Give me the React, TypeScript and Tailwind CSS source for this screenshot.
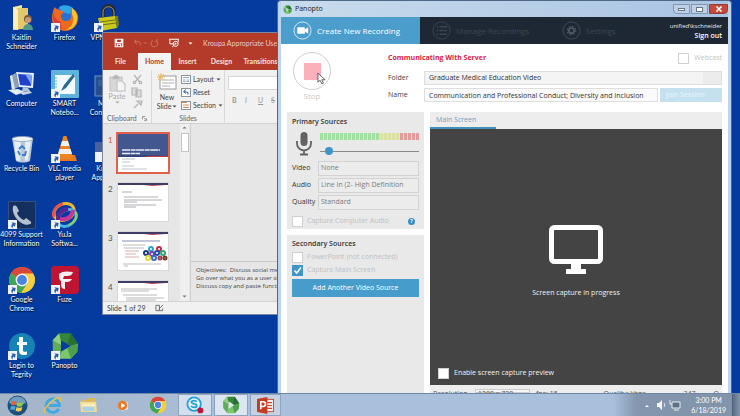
import { useState } from "react";
import type { ReactNode } from "react";
import clsx from "clsx";

/* ---------- shared drawings ---------- */

function ChromeLogo({ className }: { className?: string }) {
  return (
    <svg viewBox="0 0 48 48" className={className} aria-hidden>
      <circle cx="24" cy="24" r="22" fill="#f6cf3f" />
      <path d="M24 24 4.9 13A22 22 0 0 1 43.1 13Z" fill="#d9463a" />
      <path d="M4.9 13A22 22 0 0 0 23 46L33.5 29.5 24 24Z" fill="#3fa557" />
      <path d="M24 13H43.1A22 22 0 0 1 23 46L33.5 29.5Z" fill="#f6cf3f" />
      <circle cx="24" cy="24" r="11" fill="#f3f3f3" />
      <circle cx="24" cy="24" r="8.4" fill="#4a83e0" />
    </svg>
  );
}

/* three folded ribbons round an open play triangle */
function PanoptoLogo({ className }: { className?: string }) {
  return (
    <svg viewBox="0 0 48 48" className={className} aria-hidden>
      <path d="M14 2l3 12v20l-3 12L3 32V14z" fill="#5fae57" />
      <path d="M3 14L14 2l3 12v8z" fill="#8fce80" />
      <path d="M14 2h20l12 18-12 4-17-10z" fill="#37853d" />
      <path d="M34 2l12 18-12 4-6-3z" fill="#276f33" />
      <path d="M46 20l-1 14-11 12H14l3-12 17-10z" fill="#7cc76b" />
      <path d="M46 20l-1 14-11 12-6-18 6-4z" fill="#4e9f4b" />
    </svg>
  );
}

function UserFolder() {
  return (
    <svg viewBox="0 0 28 28" className="size-7" aria-hidden>
      <path d="M5 3l9-2v24l-9 1z" fill="#f3e3a0" />
      <path d="M9 4h11v21H8z" fill="#e3c96c" />
      <path d="M5 3l5 3v20l-5-1z" fill="#fbf0bd" />
      <circle cx="20" cy="15" r="4" fill="#7a5a3c" />
      <circle cx="20" cy="16" r="3" fill="#c89878" />
      <path d="M15 26c0-8 10-8 10 0z" fill="#4d9a8c" />
    </svg>
  );
}

function FirefoxLogo() {
  return (
    <svg viewBox="0 0 28 28" className="size-7" aria-hidden>
      <circle cx="14" cy="14" r="12" fill="#2b6fd0" />
      <path d="M8 3c4-3 11-2 14 1l-3 6-8-2z" fill="#2fa6e8" />
      <path d="M2 8c0-2 1-4 2-5 1 2 3 3 5 3l4 2-3 3c0 4 2 6 5 6 4 0 6-3 5-7l1-6c5 3 7 8 6 12-1 7-7 11-13 11S1 22 1 15c0-3 0-5 1-7z" fill="#ec6a1f" />
      <path d="M21 4c5 4 6 8 5 12-1 6-5 10-11 10 7-4 9-10 6-16z" fill="#f8c42c" />
      <path d="M2 8c1 5 3 8 8 10-1 3 0 5 2 7C5 24 1 19 2 8z" fill="#dd3b3a" />
    </svg>
  );
}

function VpnLock() {
  return (
    <svg viewBox="0 0 28 28" className="size-7" aria-hidden>
      <path d="M9 14V8c0-8 12-8 11 0v6" fill="none" stroke="#272b30" strokeWidth="4" />
      <path d="M9 13V8c0-7 11-7 11 0v5" fill="none" stroke="#8a939c" strokeWidth="1" />
      <path d="M4 14l17-2 2 12-16 3z" fill="#c9c81c" />
      <path d="M21 12l2 12 2-3-1-9z" fill="#7c7d12" />
      <path d="M6 18l15-2M7 21l15-2" stroke="#6f7010" strokeWidth="1" />
    </svg>
  );
}

function ComputerIcon() {
  return (
    <svg viewBox="0 0 28 28" className="size-7" aria-hidden>
      <path d="M2 6l6-3 3 14-7 3z" fill="#8fa0b4" />
      <path d="M2 6l2-1 3 14-3 1z" fill="#dfe6ee" />
      <path d="M8 2l18 1-1 15-14-1z" fill="#e4ecf4" />
      <path d="M10 4l14 1-1 11-11-1z" fill="#2042c8" />
      <path d="M17 4l7 1-1 9z" fill="#7ba4f0" />
      <path d="M15 17l5 1 2 3h-8z" fill="#b7c4d2" />
      <path d="M0 20l10-1 7 3-9 3z" fill="#e6edf4" />
      <path d="M11 22l11-1 2 2-9 2z" fill="#cbd6e1" />
    </svg>
  );
}

function SmartNotebook() {
  return (
    <svg viewBox="0 0 28 28" className="size-7" aria-hidden>
      <rect width="28" height="28" rx="1" fill="#5fb4dc" />
      <path d="M4 5h20v19H4z" fill="#f3fafd" />
      <path d="M22 4L13 15l-3 6 5-3L24 6z" fill="#256b94" />
      <path d="M4 8h2M4 11h2M4 14h2M4 17h2" stroke="#5fb4dc" strokeWidth="1" />
    </svg>
  );
}

function HiddenSlides() {
  return (
    <svg viewBox="0 0 28 28" className="size-7" aria-hidden>
      <rect x="1" y="6" width="26" height="20" fill="#274f8f" stroke="#6f92c4" />
      <path d="M4 10h18v6H4z" fill="#335f9f" />
    </svg>
  );
}

function HiddenDeck() {
  return (
    <svg viewBox="0 0 28 28" className="size-7" aria-hidden>
      <rect x="1" y="7" width="26" height="20" fill="#f2f3f6" />
      <rect x="1" y="7" width="26" height="10" fill="#4c609c" />
    </svg>
  );
}

function RecycleBin() {
  return (
    <svg viewBox="0 0 28 28" className="size-7" aria-hidden>
      <path d="M4 3h21l-3 23c-4 2-10 2-14 0z" fill="#b9c8d8" />
      <path d="M6 5h7l-1 21-4-1zM17 5h6l-3 20-3 1z" fill="#e6edf3" />
      <ellipse cx="14.5" cy="4" rx="10.500" ry="2.600" fill="#eef3f7" stroke="#8fa1b3" strokeWidth=".8" />
      <path d="M11 14l3-3 3 3M18 16l-1 4h-3M12 20l-2-4" fill="none" stroke="#3a7ad0" strokeWidth="1.800" />
    </svg>
  );
}

function VlcCone() {
  return (
    <svg viewBox="0 0 28 28" className="size-7" aria-hidden>
      <path d="M4 20h20l2 6H2z" fill="#e77a1c" />
      <path d="M12.500 1h3L22 22c-4 3-12 3-16 0z" fill="#ef8423" />
      <path d="M11 6h6l1.500 5h-9zM8.500 14h11l1.500 5H7z" fill="#f1f1ef" />
    </svg>
  );
}

function SupportPhone() {
  return (
    <svg viewBox="0 0 28 28" className="size-7" aria-hidden>
      <rect x=".5" y=".5" width="27" height="27" fill="#152f5e" stroke="#33517f" />
      <path d="M5 6c0-2 3-2 4 0l2 4-2 2c1 3 4 6 7 7l2-2 4 3c2 1 1 3 0 3C15 27 3 15 5 6z" fill="#b4c0d3" />
    </svg>
  );
}

function YujaLogo() {
  return (
    <svg viewBox="0 0 28 28" className="size-7" aria-hidden fill="none">
      <ellipse cx="13" cy="11" rx="10.500" ry="8" transform="rotate(-25 13 11)" stroke="#f0b72d" strokeWidth="3" />
      <path d="M3 16C1 10 6 4 12 3" stroke="#e8564a" strokeWidth="3" />
      <ellipse cx="16" cy="17" rx="10" ry="7.500" transform="rotate(-35 16 17)" stroke="#4ab5e0" strokeWidth="3" />
      <path d="M25 11c2 5-2 11-7 13" stroke="#8fd05c" strokeWidth="2" />
      <path d="M8 21c-3-6 2-12 9-13" stroke="#5b2390" strokeWidth="4" />
      <path d="M9 18c7 1 12-2 13-9" stroke="#c9359a" strokeWidth="4" />
    </svg>
  );
}

function FuzeLogo() {
  return (
    <svg viewBox="0 0 28 28" className="size-7" aria-hidden>
      <rect width="28" height="28" rx="4" fill="#c01530" />
      <path d="M8 8c3-3 8-3 14-2-1 3-3 4-6 4h-3l-1 3h9c-1 2-3 3-5 3h-2v7c-3 0-4-2-4-4v-4C8 14 8 11 8 8z" fill="#f8eef0" />
    </svg>
  );
}

function TegrityLogo() {
  return (
    <svg viewBox="0 0 28 28" className="size-7" aria-hidden>
      <circle cx="14" cy="14" r="13" fill="#1683b5" />
      <path d="M11 5h4v5h4v3h-4v5c0 2 1 2 4 1.500v3c-5 1.500-8 0-8-4V13H9v-3h2z" fill="#fff" />
    </svg>
  );
}

function ShortcutArrow() {
  return (
    <svg viewBox="0 0 9 9" className="absolute bottom-0 left-0 size-[9px]" aria-hidden>
      <rect width="9" height="9" fill="#eef3fa" />
      <path d="M2 8c0-3 1-4 3-4V2l3 3-3 3V6C4 6 3 6.500 2 8z" transform="rotate(-35 4.500 4.500)" fill="#2a5aa8" />
    </svg>
  );
}

/* ---------- desktop ---------- */

type DesktopItem = { label: string; icon: ReactNode; shortcut?: boolean } | null;

const desktopItems: DesktopItem[] = [
  { label: "Kaitlin\nSchneider", icon: <UserFolder /> },
  { label: "Firefox", icon: <FirefoxLogo />, shortcut: true },
  { label: "VPN Client", icon: <VpnLock />, shortcut: true },
  { label: "Computer", icon: <ComputerIcon /> },
  { label: "SMART\nNotebo...", icon: <SmartNotebook />, shortcut: true },
  { label: "Media\nConnection", icon: <HiddenSlides /> },
  { label: "Recycle Bin", icon: <RecycleBin /> },
  { label: "VLC media\nplayer", icon: <VlcCone />, shortcut: true },
  { label: "Kroupa\nAppropri...", icon: <HiddenDeck /> },
  { label: "4099 Support\nInformation", icon: <SupportPhone />, shortcut: true },
  { label: "YuJa\nSoftwa...", icon: <YujaLogo />, shortcut: true },
  null,
  { label: "Google\nChrome", icon: <ChromeLogo className="size-7" />, shortcut: true },
  { label: "Fuze", icon: <FuzeLogo />, shortcut: true },
  null,
  { label: "Login to\nTegrity", icon: <TegrityLogo />, shortcut: true },
  { label: "Panopto", icon: <PanoptoLogo className="size-7" />, shortcut: true },
  null,
];

function DesktopIcons() {
  return (
    <div className="grid h-full w-[129px] grid-cols-3 grid-rows-6">
      {desktopItems.map((item, i) =>
        item ? (
          <button key={i} className="flex min-w-0 flex-col items-center justify-start pt-1 text-center">
            <span className="relative block size-7">
              {item.icon}
              {item.shortcut && <ShortcutArrow />}
            </span>
            <span className="mt-px text-[7px] leading-[9px] whitespace-pre text-white [text-shadow:0_1px_1px_#000]">
              {item.label}
            </span>
          </button>
        ) : (
          <span key={i} />
        ),
      )}
    </div>
  );
}

/* ---------- PowerPoint ---------- */

function Caret() {
  return (
    <svg viewBox="0 0 5 3" className="inline-block h-[3px] w-[5px]" fill="currentColor" aria-hidden>
      <path d="M.5.500h4l-2 2z" />
    </svg>
  );
}

function SlideThumb({ n }: { n: number }) {
  const title = n === 1;
  return (
    <div className="flex h-[49px] shrink-0 gap-[2px]">
      <span className={clsx("w-2 text-[8px] leading-3", title ? "text-[#d2573f]" : "text-[#555]")}>{n}</span>
      <svg
        viewBox="0 0 50 38"
        className={clsx("h-[38px] w-[50px]", title ? "outline-2 outline-[#e0604a]" : "outline-1 outline-[#d8d8d8]")}
        aria-hidden
      >
        <rect width="50" height="38" fill="#fff" />
        {title ? (
          <>
            <rect width="50" height="22" fill="#43578f" />
            <path d="M0 21h28l22 1v1H0z" fill="#37447a" />
            <path d="M26 22h24v1H30z" fill="#c23b3b" />
            <path d="M4 16h38M4 19.500h18" stroke="#e8ebf4" strokeWidth="1.600" strokeDasharray="8 .6 5 .5" />
            <path d="M4 25h13M4 28h8M4 32h12M4 35h25" stroke="#a3a9ba" strokeWidth=".7" />
          </>
        ) : (
          <>
            <path d="M0 0h50v2H0z" fill="#3d3c66" />
            <path d="M26 2h22l-14 1z" fill="#c3424e" />
          </>
        )}
        {n === 2 && (
          <path d="M4 9h10M6 14h34M6 17h38M6 19h13M6 22h32M6 24h12" stroke="#9a9a9e" strokeWidth=".8" />
        )}
        {n === 3 && (
          <>
            <path d="M4 9h38" stroke="#8390b5" strokeWidth="1.200" />
            <path d="M5 13h22M6 16h20M5 32h38M6 34h4" stroke="#a9a9b0" strokeWidth=".8" />
            <path d="M7 19h14M7 22h11M7 25h14" stroke="#d49a9a" strokeWidth=".8" />
            <g fill="none" strokeWidth="2">
              <circle cx="28" cy="21" r="2" stroke="#1d3a80" />
              <circle cx="33" cy="17" r="2" stroke="#2d9fd0" />
              <circle cx="41" cy="17" r="2" stroke="#c52a44" />
              <circle cx="34" cy="22" r="2" stroke="#8e3aa0" />
              <circle cx="39" cy="21" r="2" stroke="#234fa8" />
              <circle cx="45" cy="21" r="2" stroke="#2fa56b" />
              <circle cx="30" cy="26" r="2" stroke="#e8d93a" />
              <circle cx="36" cy="26" r="2" stroke="#2d6fd0" />
              <circle cx="42" cy="26" r="1.500" stroke="#a8384a" />
              <circle cx="47" cy="26" r="1.500" stroke="#6b3b28" />
            </g>
          </>
        )}
        {n === 4 && (
          <path d="M3 8h36M3 10h28M5 14h34M8 17h38M8 19h30M8 22h36M8 25h30" stroke="#a8a8ac" strokeWidth=".8" />
        )}
      </svg>
    </div>
  );
}

function PowerPointWindow() {
  return (
    <section
      aria-label="PowerPoint"
      className="absolute top-[32px] left-[102px] flex h-[283px] w-[400px] flex-col overflow-hidden border border-[#7d86a0] bg-[#e6e6e6] text-[7px] text-[#444]"
    >
      <div className="flex h-5 shrink-0 items-center bg-[#b43a29] pl-[11px] text-white">
        <svg viewBox="0 0 12 12" className="size-[10px]" fill="none" stroke="#fff" strokeWidth="1.400" aria-hidden>
          <path d="M1.500 1.500h9v9h-9zM3 2v3.500h6V2M4 10V7.500h4V10" />
        </svg>
        <svg viewBox="0 0 34 12" className="ml-2 h-[10px] w-[30px]" fill="none" stroke="#cb6a5b" strokeWidth="1.300" aria-hidden>
          <path d="M4 2L2 5l3 2M2 5c5-2 8 0 7 4M13 6h4M24 3a4 4 0 1 0 5 1M29 1v3h-3" />
        </svg>
        <svg viewBox="0 0 14 12" className="ml-[6px] h-[10px] w-3" fill="none" stroke="#fff" strokeWidth="1.200" aria-hidden>
          <path d="M1 1.500h12M2 2v5h4M12 2v3M5 11l2-3" />
          <circle cx="9" cy="7" r="3" />
          <path d="M8 5.500v3L10.500 7z" fill="#fff" stroke="none" />
        </svg>
        <span className="ml-2 w-2">
          <Caret />
        </span>
        <span className="ml-[7px] whitespace-nowrap text-[#edc9c3]">Kroupa Appropriate Use of Electronic Media</span>
      </div>

      <nav className="flex h-[17px] shrink-0 items-stretch bg-[#b43a29] font-bold text-[#f6e3df]">
        <button className="w-[35px] text-center">File</button>
        <button className="w-[33px] bg-[#f3f3f3] text-center text-[#b43a29]">Home</button>
        <button className="w-[33px] text-center">Insert</button>
        <button className="w-[35px] text-center">Design</button>
        <button className="w-[43px] text-center">Transitions</button>
      </nav>

      <div className="flex h-[54px] shrink-0 border-b border-[#d2d2d2] bg-[#f1f1f1]">
        <div className="flex w-[49px] flex-col justify-between border-r border-[#d9d9d9] pt-1 pl-1">
          <div className="flex gap-1 text-[#a6a6a6]">
            <button className="flex w-5 flex-col items-center leading-[9px]">
              <svg viewBox="0 0 18 18" className="size-[18px]" fill="none" stroke="#c4c4c4" strokeWidth="1.200" aria-hidden>
                <path d="M2 3h12v14H2z" fill="#d8d8d8" />
                <path d="M5 3l3-2 3 2v2H5z" fill="#b4b4b4" />
                <path d="M9 7h5l3 3v7H9z" fill="#f4f4f4" />
              </svg>
              Paste
              <Caret />
            </button>
            <svg viewBox="0 0 14 36" className="h-9 w-[14px]" fill="none" stroke="#b4b4b4" strokeWidth="1.200" aria-hidden>
              <path d="M3 1l6 7M10 1L4 8" />
              <circle cx="3.500" cy="8.500" r="1.200" />
              <circle cx="9.500" cy="8.500" r="1.200" />
              <path d="M1 14h5v7H1zM5 16h5v7H5zM3 34l4-4M6 27l4 4 1-4z" fill="#dedede" />
            </svg>
          </div>
          <div className="flex items-center justify-between pr-1 leading-[10px] text-[#666]">
            Clipboard
            <svg viewBox="0 0 6 6" className="size-[5px]" fill="none" stroke="#888" aria-hidden>
              <path d="M.5 4V.500H4M2 2l3 3M5.500 2.500v3h-3" />
            </svg>
          </div>
        </div>
        <div className="flex w-[73px] flex-col justify-between border-r border-[#d9d9d9] pt-[3px] pl-1">
          <div className="flex gap-[3px]">
            <button className="flex w-[22px] flex-col items-center leading-[9px]">
              <svg viewBox="0 0 20 18" className="mb-[2px] h-[18px] w-5" aria-hidden>
                <rect x="3" y="3" width="16" height="13" fill="#fff" stroke="#9a9a9a" />
                <path d="M5 7h12M5 10h12M5 13h8" stroke="#b0b0b0" />
                <path d="M4 0v8M0 4h8M1 1l6 6M7 1L1 7" stroke="#eab95a" />
              </svg>
              <span>New</span>
              <span className="flex items-center gap-px whitespace-nowrap">
                Slide <Caret />
              </span>
            </button>
            <div className="flex flex-col">
              {["Layout", "Reset", "Section"].map((label) => (
                <button key={label} className="flex h-[13px] items-center gap-[2px] whitespace-nowrap">
                  <svg viewBox="0 0 10 9" className="h-[9px] w-[10px]" aria-hidden>
                    <rect x=".5" y=".5" width="9" height="8" fill="#fff" stroke="#8c949e" />
                    {label === "Layout" && <path d="M2 2.500h6M2 5h2.500M2 6.500h2.500M5.500 5H8M5.500 6.500H8" stroke="#9aa8b8" />}
                    {label === "Reset" && <path d="M7 6.500V4.500L3 3.500M5 1.500L2.500 3.500 5 5.500" fill="none" stroke="#2f6ba8" />}
                    {label === "Section" && <path d="M0 1.500h6M2 4h6M2 6.500h6" stroke="#d88a58" />}
                  </svg>
                  {label}
                  {label !== "Reset" && <Caret />}
                </button>
              ))}
            </div>
          </div>
          <div className="pr-1 text-center leading-[10px] text-[#666]">Slides</div>
        </div>
        <div className="flex flex-1 flex-col gap-[5px] pt-[6px] pl-[3px]">
          <div className="h-[14px] w-24 border border-[#d6d6d6] bg-white" />
          <div className="flex pl-1 text-[#999]">
            <b className="w-[13px]">B</b>
            <i className="w-[13px]">I</i>
            <u className="w-[13px]">U</u>
            <s className="w-[13px]">S</s>
          </div>
        </div>
      </div>

      <div className="flex min-h-0 flex-1">
        <div className="flex w-[77px] flex-col overflow-hidden pt-[10px] pl-[5px]">
          {[1, 2, 3, 4].map((n) => (
            <SlideThumb key={n} n={n} />
          ))}
        </div>
        <div className="flex w-[9px] flex-col items-center justify-between bg-[#efefef] py-px text-[#777]">
          <div className="flex w-full flex-col items-center gap-[2px]">
            <span className="flex h-[6px] rotate-180 items-center">
              <Caret />
            </span>
            <div className="h-[19px] w-2 border border-[#c4c4c4] bg-white" />
          </div>
          <span className="flex h-2 items-center">
            <Caret />
          </span>
        </div>
        <div className="ml-px flex flex-1 flex-col justify-end border-l border-[#cfcfcf]">
          <p className="h-10 border-t border-[#c9c9c9] pt-1 pl-[5px] font-['Open_Sans',sans-serif] text-[6px] leading-2 whitespace-nowrap">
            Objectives: &nbsp;Discuss social media policy
            <br />
            Go over what you as a user should know
            <br />
            Discuss copy and paste functions
          </p>
        </div>
      </div>

      <footer className="flex h-[13px] shrink-0 items-center gap-[10px] border-t border-[#d4d4d4] bg-[#f1f1f1] pl-1">
        Slide 1 of 29
        <svg viewBox="0 0 10 9" className="h-2 w-[9px]" fill="none" stroke="#666" aria-hidden>
          <path d="M5 1.500H1v6h4M5 1.500v6h3.500V5M4 6l5-5" />
        </svg>
      </footer>
    </section>
  );
}

/* ---------- Panopto ---------- */

function Check({ label, muted, big, ...rest }: { label: string; muted?: boolean; big?: boolean; defaultChecked?: boolean }) {
  return (
    <label className={clsx("flex h-[13px] items-center", big ? "gap-[5px]" : "gap-1", muted && "text-[#bfbfbf]")}>
      <span className="grid size-[11px] shrink-0 place-items-center">
        <input
          type="checkbox"
          {...rest}
          className="peer col-start-1 row-start-1 size-[11px] appearance-none border border-[#d0d0d0] bg-white checked:border-[#3f95c6] checked:bg-[#3f95c6]"
        />
        <svg viewBox="0 0 11 11" className="pointer-events-none invisible col-start-1 row-start-1 size-[11px] peer-checked:visible" aria-hidden>
          <path d="M2.500 5.500l2.200 2.500L9 2.500" fill="none" stroke="#fff" strokeWidth="1.500" />
        </svg>
      </span>
      {label}
    </label>
  );
}

function SourceSelect({ label, value }: { label: string; value: string }) {
  return (
    <label className="flex h-[17px] items-center">
      <span className="w-[26px] shrink-0 text-[#333]">{label}</span>
      <select className="h-[15px] min-w-0 flex-1 appearance-none border border-[#d2d2d2] bg-[#ececec] px-[2px] text-[#7b7b7b]">
        <option>{value}</option>
      </select>
    </label>
  );
}

function LevelMeter() {
  return (
    <div className="flex h-[7px] gap-px bg-[#dde6da]">
      {Array.from({ length: 25 }, (_, i) => (
        <span key={i} className={clsx("flex-1", i < 15 ? "bg-[#a2dfa2]" : i < 20 ? "bg-[#dbe2a4]" : "bg-[#e09c9c]")} />
      ))}
    </div>
  );
}

function PrimarySources() {
  const [level, setLevel] = useState(6);
  return (
    <section className="bg-[#e9e9e9] px-[5px] pt-1 pb-px">
      <h2 className="leading-3 font-semibold text-[#333]">Primary Sources</h2>
      <div className="flex gap-1 pt-1 pb-1">
        <svg viewBox="0 0 24 24" className="h-6 w-6 shrink-0" aria-hidden>
          <rect x="8.500" y="0" width="7" height="14" rx="3.500" fill="#636363" />
          <path d="M5 9v2.500a7 7 0 0 0 14 0V9M12 18v4M8 22.500h8" fill="none" stroke="#636363" strokeWidth="1.800" />
        </svg>
        <div className="flex flex-1 flex-col gap-[7px] pt-px">
          <LevelMeter />
          <input
            type="range"
            aria-label="Volume"
            value={level}
            onChange={(e) => setLevel(Number(e.target.value))}
            className="h-2 w-full appearance-none bg-[linear-gradient(#8a8a8a,#8a8a8a)] bg-[length:100%_1px] bg-center bg-no-repeat [&::-webkit-slider-thumb]:size-2 [&::-webkit-slider-thumb]:appearance-none [&::-webkit-slider-thumb]:rounded-full [&::-webkit-slider-thumb]:bg-[#3f95c6]"
          />
        </div>
      </div>
      <SourceSelect label="Video" value="None" />
      <SourceSelect label="Audio" value="Line In (2- High Definition" />
      <SourceSelect label="Quality" value="Standard" />
      <div className="flex items-center justify-between pt-1 pr-1">
        <Check label="Capture Computer Audio" muted />
        <button className="size-[7px] rounded-full bg-[#3a8dc4] text-[5px] leading-[7px] font-bold text-white">?</button>
      </div>
    </section>
  );
}

function SecondarySources() {
  return (
    <section className="flex-1 bg-[#e9e9e9] px-[5px] pt-[3px]">
      <h2 className="pb-px leading-3 font-semibold text-[#333]">Secondary Sources</h2>
      <Check label="PowerPoint (not connected)" muted />
      <Check label="Capture Main Screen" muted defaultChecked />
      <button className="mt-[2px] h-[18px] w-[127px] bg-[#469ccb] text-white">Add Another Video Source</button>
    </section>
  );
}

function RecordingForm() {
  return (
    <div className="flex pt-2 pr-[6px] pl-3">
      <div className="flex w-[95px] shrink-0 flex-col items-start">
        <button className="flex w-[38px] flex-col items-center leading-[10px] text-[#c9c9c9]">
          <span className="grid size-[38px] place-items-center rounded-full border border-[#cfcfcf]">
            <span className="size-[17px] bg-[#fab1b9]" />
          </span>
          <span className="mt-px text-[8px]">Stop</span>
        </button>
      </div>
      <div className="flex min-w-0 flex-1 flex-col gap-[3px]">
        <div className="flex h-4 items-start justify-between">
          <p className="leading-3 font-bold text-[#d9223f]">Communicating With Server</p>
          <Check label="Webcast" muted big />
        </div>
        <label className="flex items-center">
          <span className="w-9">Folder</span>
          <select className="h-[14px] min-w-0 flex-1 appearance-none border border-[#dedede] bg-[linear-gradient(90deg,#f4f4f4_94%,#ececec_94%)] px-1 text-[#333]">
            <option>Graduate Medical Education Video</option>
          </select>
        </label>
        <div className="flex items-center gap-[2px]">
          <label className="flex min-w-0 flex-1 items-center">
            <span className="w-9">Name</span>
            <input
              defaultValue="Communication and Professional Conduct; Diversity and Inclusion"
              className="h-[14px] min-w-0 flex-1 border border-[#dedede] bg-[#fafafa] px-1 text-[#333]"
            />
          </label>
          <button className="h-[14px] w-[62px] bg-[#c5e0ef] pl-[6px] text-left text-[#eef7fc]">Join Session</button>
        </div>
      </div>
    </div>
  );
}

function MainScreen() {
  return (
    <section className="flex min-w-0 flex-1 flex-col bg-[#ededed]">
      <div className="h-[17px] shrink-0">
        <button className="h-[17px] w-[66px] border-b-2 border-[#3f93b8] pt-px pl-[6px] text-left text-[#6c9fc4]">Main Screen</button>
      </div>
      <div className="flex flex-1 flex-col bg-[#444] text-[#f2f2f2]">
        <div className="flex flex-1 flex-col items-center justify-end pb-[68px]">
          <svg viewBox="0 0 54 50" className="h-[50px] w-[54px]" aria-hidden>
            <rect x="2.500" y="2.500" width="49" height="34" rx="3" fill="none" stroke="#fff" strokeWidth="5" />
            <path d="M22 38h10v6h5v5H17v-5h5z" fill="#fff" />
          </svg>
          <p className="mt-3 leading-3">Screen capture in progress</p>
        </div>
        <div className="pb-[5px] pl-2">
          <Check label="Enable screen capture preview" big />
        </div>
      </div>
      <div className="flex h-2 shrink-0 overflow-hidden px-[3px] pt-1 leading-[10px] text-[#555]">
        <span className="w-[42px]">Resolution</span>
        <span className="w-[55px] border border-[#ccc] bg-[#f7f7f7] px-[2px] leading-2">1280 x 720</span>
        <span className="flex-1 pl-[6px]">fps: 15</span>
        <span className="w-20">Quality: kbps</span>
        <span className="w-[30px]">347</span>
        <span>O</span>
      </div>
    </section>
  );
}

function PanoptoWindow() {
  return (
    <section
      aria-label="Panopto"
      className="absolute inset-y-0 right-2 left-[277px] flex flex-col rounded-t border border-b-0 border-[#4d6886] bg-[#bdd5ec] px-[3px] font-['Open_Sans',sans-serif] text-[7px] text-[#444]"
    >
      <header className="flex h-4 shrink-0 items-center gap-[3px] bg-gradient-to-r from-[#c9dcec] to-[#a9c3e3] pl-[2px] text-[#222]">
        <PanoptoLogo className="size-[9px]" />
        <span className="flex-1 pt-px">Panopto</span>
        <div className="flex h-[10px] gap-px self-center">
          <button aria-label="Minimize" className="grid w-[17px] place-items-center rounded-bl border border-[#8097b4] bg-[#bfd0e5]">
            <span className="h-[3px] w-[7px] border border-[#65758a] bg-white" />
          </button>
          <button aria-label="Maximize" className="grid w-[17px] place-items-center border border-[#8097b4] bg-[#bfd0e5]">
            <span className="h-[5px] w-[7px] border border-[#65758a] bg-white" />
          </button>
          <button aria-label="Close" className="grid w-[19px] place-items-center rounded-br border border-[#8d3f3a] bg-[#c8483c]">
            <svg viewBox="0 0 8 6" className="h-[6px] w-2" stroke="#fff" strokeWidth="1.600" aria-hidden>
              <path d="M1.500.5l5 5M6.500.5l-5 5" />
            </svg>
          </button>
        </div>
      </header>

      <nav className="flex h-[27px] shrink-0 items-center bg-[#1e2834] text-[8px] text-[#3d4752]">
        <button className="flex h-full w-[139px] items-center gap-[5px] bg-[#4b9dcc] pl-3 text-white">
          <svg viewBox="0 0 20 20" className="size-[19px]" aria-hidden>
            <circle cx="10" cy="10" r="9" fill="none" stroke="#d9ecf6" />
            <rect x="4.500" y="6.500" width="8" height="7" rx="1" fill="#fff" />
            <path d="M12.500 9l3.500-2.500v7L12.500 11z" fill="#fff" />
          </svg>
          Create New Recording
        </button>
        <button className="flex w-[130px] items-center gap-[5px] pl-3">
          <svg viewBox="0 0 20 20" className="size-[19px]" fill="none" stroke="#3b4550" aria-hidden>
            <circle cx="10" cy="10" r="9" />
            <path d="M5 6h1.500M8 6h8M5 10h1.500M8 10h8M5 14h1.500M8 14h8" strokeWidth="1.500" />
          </svg>
          Manage Recordings
        </button>
        <button className="flex flex-1 items-center gap-[5px] pl-3">
          <svg viewBox="0 0 20 20" className="size-[19px]" fill="none" stroke="#4a545f" aria-hidden>
            <circle cx="10" cy="10" r="9" strokeWidth=".8" />
            <circle cx="10" cy="10" r="2.800" strokeWidth="2" />
            <circle cx="10" cy="10" r="4.400" strokeWidth="1.400" strokeDasharray="1.700 1.750" />
          </svg>
          Settings
        </button>
        <div className="pr-[6px] text-right text-[7px] leading-[9px] text-[#e8ecf0]">
          <p className="text-[6px]">unified\kschneider</p>
          <a href="#signout" className="block font-semibold text-white">
            Sign out
          </a>
        </div>
      </nav>

      <div className="flex min-h-0 flex-1 flex-col bg-white">
        <RecordingForm />
        <div className="mt-[10px] flex min-h-0 flex-1 gap-[6px] pr-[6px] pl-[6px]">
          <div className="flex w-[137px] shrink-0 flex-col gap-[6px]">
            <PrimarySources />
            <SecondarySources />
          </div>
          <MainScreen />
        </div>
      </div>

      <svg viewBox="0 0 10 14" className="absolute top-[71px] left-[39px] h-[13px] w-[9px]" aria-hidden>
        <path d="M1 1v10l2.500-2 1.800 4 1.800-.8L5.400 8.400H9z" fill="#fff" stroke="#444" strokeWidth=".9" />
      </svg>
    </section>
  );
}

/* ---------- taskbar ---------- */

function Taskbar() {
  return (
    <footer className="flex h-[23px] shrink-0 items-center border-t border-[#6f88a8] bg-[#a9c0dc]">
      <div className="flex h-full items-center bg-gradient-to-r from-[#a3b4c7] to-[#a8bcd4]">
        <button aria-label="Start" className="grid w-[34px] place-items-center">
          <svg viewBox="0 0 22 22" className="size-[21px]" aria-hidden>
            <circle cx="11" cy="11" r="10.500" fill="#1e4f7c" />
            <path d="M2 8a9.500 9.500 0 0 1 18 0c-5 3-13 3-18 0z" fill="#6f9dbd" />
            <path d="M5 7c2-1 3-1 5 0l-.8 4c-2-1-3-1-5 0z" fill="#e2633a" />
            <path d="M11 7.500c2 1 4 1 6 0l-1 4c-2 1-4 1-6 0z" fill="#94c94c" />
            <path d="M4 12c2-1 3-1 5 0l-.8 4c-2-1-3-1-5 0z" fill="#4fa5e4" />
            <path d="M10 12.500c2 1 4 1 6 0l-1 4c-2 1-4 1-6 0z" fill="#f5cf49" />
          </svg>
        </button>
        <button aria-label="Internet Explorer" className="grid w-9 place-items-center">
          <svg viewBox="0 0 20 20" className="size-[19px]" fill="none" aria-hidden>
            <path d="M16.500 13.500a7 7 0 1 1 .8-3.500H6" stroke="#3fa9e2" strokeWidth="3" />
            <path d="M2 18C-1 14 12 1 18 2c1 .5 1 2 0 4" stroke="#e8c24a" strokeWidth="1.500" />
          </svg>
        </button>
        <button aria-label="Windows Explorer" className="grid w-9 place-items-center">
          <svg viewBox="0 0 20 18" className="h-[17px] w-[19px]" aria-hidden>
            <path d="M2 3h6l1-2h8v4H2z" fill="#dcb95a" />
            <path d="M1 5h17l1 11H2z" fill="#f2dc91" />
            <path d="M4 10h12v5H4z" fill="#a7d3e8" />
            <path d="M3 7h14v3H3z" fill="#f9edbd" />
          </svg>
        </button>
        <button aria-label="Media Player" className="grid w-8 place-items-center">
          <svg viewBox="0 0 14 14" className="size-[13px]" aria-hidden>
            <path d="M6 2l7 2v7l-7 2z" fill="#d9e4ee" />
            <circle cx="7" cy="7" r="5" fill="#ea7a22" />
            <path d="M5.500 4v6L10 7z" fill="#fff" />
          </svg>
        </button>
        <button aria-label="Chrome" className="grid w-10 place-items-center">
          <ChromeLogo className="size-[18px]" />
        </button>
      </div>
      <div className="flex h-full flex-1 gap-[2px]">
        <button aria-label="Skype" className="grid w-[34px] place-items-center border border-[#8ea3bd] bg-[#d3dfec]">
          <svg viewBox="0 0 20 20" className="size-[18px]" aria-hidden>
            <circle cx="9" cy="9" r="7.500" fill="#eef8fd" stroke="#22a0dc" strokeWidth="2" />
            <path d="M12 6.500c-1-2-6-2-6 .3 0 2.500 6 1.500 6 4 0 2.400-5 2.600-6.300.2" fill="none" stroke="#22a0dc" strokeWidth="2" />
            <circle cx="16" cy="16" r="3.300" fill="#c0153a" />
          </svg>
        </button>
        <button aria-label="Panopto Recorder" className="grid w-[34px] place-items-center border border-[#8ea3bd] bg-[#dce6f0]">
          <PanoptoLogo className="size-[18px]" />
        </button>
        <button aria-label="PowerPoint" className="grid w-[31px] place-items-center border border-[#8ea3bd] bg-[#c4d2e3]">
          <svg viewBox="0 0 18 18" className="size-[17px]" aria-hidden>
            <rect x="8" y="2.500" width="9.500" height="13" fill="#f7efed" stroke="#c8452c" />
            <path d="M11 6h5M11 9h5M11 12h5" stroke="#c8452c" strokeWidth="1.300" />
            <path d="M0 2l11-2v18L0 16z" fill="#c33d22" />
            <path d="M4 13V5h2.500a2.400 2.400 0 0 1 0 5H4" fill="none" stroke="#fff" strokeWidth="1.700" />
          </svg>
        </button>
      </div>
      <div className="flex h-full items-center bg-gradient-to-r from-[#a9c0dc] via-[#8496ad] via-20% to-[#8294aa] pl-8 text-white">
        <svg viewBox="0 0 36 12" className="mr-[10px] h-3 w-9" aria-hidden>
          <path d="M0 8l2-2 2 2z" fill="#fff" />
          <path d="M12 4h2l3-3v10l-3-3h-2z" fill="#f4f7fa" />
          <path d="M19 4c1 1 1 3 0 4" stroke="#e3e9f0" fill="none" />
          <path d="M27 3h8v6h-8zM29 11h5M25 1v4h2" stroke="#e9eef4" fill="#5d7088" />
        </svg>
        <p className="pr-[6px] text-center text-[7px] leading-[10px]">
          3:00 PM
          <br />
          6/18/2019
        </p>
      </div>
      <button aria-label="Show desktop" className="h-full w-2 border-l border-[#4e617a] bg-gradient-to-r from-[#5c6e86] to-[#8496ac]" />
    </footer>
  );
}

export default function App() {
  return (
    <div className="flex h-screen flex-col overflow-hidden bg-[#053a9e] font-['Lato',sans-serif]">
      <main className="relative min-h-0 flex-1">
        <DesktopIcons />
        <PowerPointWindow />
        <PanoptoWindow />
      </main>
      <Taskbar />
    </div>
  );
}
